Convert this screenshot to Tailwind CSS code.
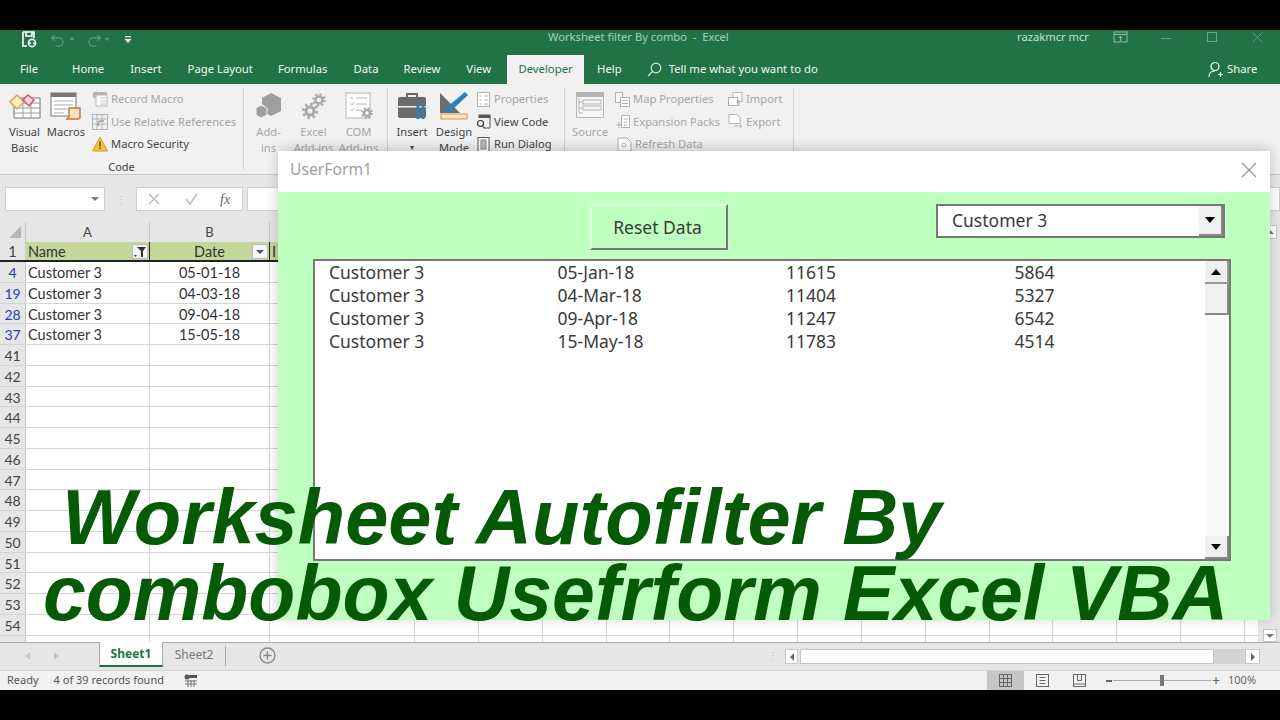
<!DOCTYPE html>
<html lang="en">
<head>
  <meta charset="UTF-8" />
  <title>Worksheet filter By combo - Excel</title>
  <script src="https://cdn.jsdelivr.net/npm/@tailwindcss/browser@4"></script>
</head>
<body class="relative w-[1280px] h-[720px] overflow-hidden bg-black font-['Noto_Sans',sans-serif]">

  <div class="h-[30px]"></div>

  <div class="h-[660px] flex flex-col bg-[#e6e6e6]">

    <!-- Title bar -->
    <div class="h-[25px] bg-[#217346] flex items-center relative text-[11.2px] text-[#a9cdb8]">
      <svg class="ml-[21px] w-[17px] h-[17px] -mt-[7px]" viewBox="0 0 17 17" fill="none" stroke="#fff" stroke-width="1.6"><path d="M2 1h11v6M2 1v14h4M5 1v4h6V1"/><circle cx="11" cy="12" r="3.6"/><path d="M8 12h2M12 12h2"/></svg>
      <svg class="ml-[12px] w-[26px] h-[16px] -mt-[5px]" viewBox="0 0 26 16" fill="none" stroke="#4e9a72" stroke-width="1.5"><path d="M5 3L1.5 6 5 9M2 6h7a4 4 0 0 1 0 8H6"/><path d="M20 6l2 2 2-2" fill="#4e9a72"/></svg>
      <svg class="ml-[9px] w-[26px] h-[16px] -mt-[5px]" viewBox="0 0 26 16" fill="none" stroke="#4e9a72" stroke-width="1.5"><path d="M12 3l3.500 3L12 9M15 6H8a4 4 0 0 0 0 8h3"/><path d="M20 6l2 2 2-2" fill="#4e9a72"/></svg>
      <svg class="ml-[12px] w-[10px] h-[10px] -mt-[5px]" viewBox="0 0 10 10" fill="#fff"><rect x="2" y="1" width="6" height="1.300"/><path d="M1.500 4h7L5 8z"/></svg>
      <span class="absolute left-[548px] -top-[1px] whitespace-pre">Worksheet filter By combo  -  Excel</span>
      <span class="absolute left-[1017px] -top-[1px] text-[#c5dfd0]">razakmcr mcr</span>
      <svg class="absolute left-[1113px] top-[1px] w-[15px] h-[12px]" viewBox="0 0 15 12" fill="none" stroke="#8dbca2"><rect x="1" y="1" width="13" height="10"/><path d="M1 3.500h13M7.500 10V5M5.500 7l2-2 2 2"/></svg>
      <div class="absolute left-[1161px] top-[8px] w-[10px] h-px bg-[#6aa585]"></div>
      <div class="absolute left-[1207px] top-[2px] w-[10px] h-[10px] border border-[#6aa585]"></div>
      <svg class="absolute left-[1252px] top-[2px] w-[11px] h-[11px]" viewBox="0 0 11 11" stroke="#5c9c7a"><path d="M.5.5l10 10M10.500.5l-10 10"/></svg>
    </div>

    <!-- Tabs -->
    <div class="h-[29px] bg-[#217346] flex items-stretch text-[11.3px] text-[#f2f7f4] relative">
      <div class="ml-[20px] mr-[21px] flex items-center">File</div>
      <div class="px-[13px] flex items-center">Home</div>
      <div class="px-[13px] flex items-center">Insert</div>
      <div class="pl-[13px] pr-[12px] flex items-center">Page Layout</div>
      <div class="px-[13px] flex items-center">Formulas</div>
      <div class="px-[13px] flex items-center">Data</div>
      <div class="pl-[12px] pr-[13px] flex items-center">Review</div>
      <div class="px-[13px] flex items-center">View</div>
      <div class="ml-[3px] w-[77px] justify-center bg-[#f1f1f1] text-[#217346] flex items-center">Developer</div>
      <div class="px-[13px] flex items-center">Help</div>
      <div class="ml-[12px] flex items-center gap-[7px]">
        <svg class="w-[15px] h-[15px]" viewBox="0 0 15 15" fill="none" stroke="#d6e6dc" stroke-width="1.200"><circle cx="9" cy="6" r="4.800"/><path d="M5.500 9.500L1 14"/></svg>
        <span>Tell me what you want to do</span>
      </div>
      <div class="absolute left-[1208px] top-0 h-full flex items-center gap-[3px]">
        <svg class="w-[16px] h-[17px]" viewBox="0 0 16 17" fill="none" stroke="#fff" stroke-width="1.200"><circle cx="7" cy="5.500" r="4"/><path d="M1 16c0-3.500 2-6 6-6M12.500 11v5M10 13.500h5"/></svg>
        <span>Share</span>
      </div>
    </div>

    <!-- Ribbon -->
    <div class="h-[91px] bg-[#f1f1f1] border-b border-[#c6c6c6] flex overflow-hidden text-[11.2px] text-[#444] leading-[16px] shrink-0">

      <!-- Code -->
      <div class="w-[244px] pl-[5px] border-r border-[#d4d4d4] my-[4px] relative">
        <div class="flex">
          <div class="w-[39px] pt-[4px] flex flex-col items-center">
            <svg class="w-[32px] h-[28px]" viewBox="0 0 32 28"><rect x="5" y="6" width="26" height="20" fill="#fff" stroke="#777"/><path d="M5 11h26M5 16h26M5 21h26M14 6v20M22 6v20" stroke="#999"/><path d="M1 10l7-7 7 7-7 7z" fill="#fbeec2" stroke="#d6a94e" stroke-width="1.500"/><path d="M14 8l5-5 6 5-5 6z" fill="#f6d5dc" stroke="#c4606f" stroke-width="1.500"/></svg>
            <div class="mt-[4px] text-center">Visual<br>Basic</div>
          </div>
          <div class="w-[44px] pt-[4px] flex flex-col items-center">
            <svg class="w-[32px] h-[28px]" viewBox="0 0 32 28"><rect x="1" y="1" width="25" height="23" fill="#fff" stroke="#777"/><rect x="1" y="1" width="25" height="4" fill="#777"/><path d="M4 9h19M4 13h19M4 17h14M4 21h10" stroke="#aaa"/><path d="M19 16h11v9a2 2 0 0 1-2 2H17l2-2z" fill="#f5e2c8" stroke="#c97a36" stroke-width="1.500"/></svg>
            <div class="mt-[4px]">Macros</div>
          </div>
          <div class="ml-[4px] flex flex-col">
            <div class="h-[22.5px] flex items-center gap-[3px] text-[#a6a6a6]">
              <svg class="w-[16px] h-[16px]" viewBox="0 0 16 16"><circle cx="4" cy="4" r="3.500" fill="#b5b5b5"/><rect x="4" y="4" width="11" height="11" fill="#fff" stroke="#b5b5b5"/><path d="M8 7h6M8 10h6M8 13h6" stroke="#c4c4c4"/><rect x="7" y="1" width="8" height="3" fill="#b5b5b5"/></svg>
              <span>Record Macro</span>
            </div>
            <div class="h-[22.5px] flex items-center gap-[3px] text-[#a6a6a6]">
              <svg class="w-[16px] h-[16px]" viewBox="0 0 16 16" fill="none" stroke="#b0b0b0"><rect x=".5" y=".5" width="15" height="15"/><path d="M1 5h14M5 1v14M10 1v14M1 10h14"/><path d="M7 12c-2-2-1-5 2-5h3" stroke="#999" stroke-width="1.300"/></svg>
              <span>Use Relative References</span>
            </div>
            <div class="h-[22.5px] flex items-center gap-[3px]">
              <svg class="w-[16px] h-[16px]" viewBox="0 0 16 16"><path d="M8 1l7.500 14H.5z" fill="#f5c242" stroke="#d89a2b"/><rect x="7.300" y="5.500" width="1.500" height="5" fill="#5a4a20"/><rect x="7.300" y="11.500" width="1.500" height="1.500" fill="#5a4a20"/></svg>
              <span>Macro Security</span>
            </div>
          </div>
        </div>
        <div class="absolute left-0 w-full top-[71px] text-center text-[11px]">Code</div>
      </div>

      <!-- Add-ins -->
      <div class="w-[144px] pl-[1px] flex text-[#a6a6a6] border-r border-[#d4d4d4] my-[4px]">
        <div class="w-[47px] pt-[4px] flex flex-col items-center">
          <svg class="w-[28px] h-[28px]" viewBox="0 0 28 28" fill="#9f9f9f"><path d="M16 1l10 5v13l-10 5-6-3V14l-3-2V6z"/><path d="M6 13l6 3v7l-6 3-5-3v-7z" stroke="#f1f1f1"/></svg>
          <div class="mt-[4px] text-center">Add-<br>ins</div>
        </div>
        <div class="w-[43px] pt-[4px] flex flex-col items-center">
          <svg class="w-[28px] h-[28px]" viewBox="0 0 28 28" fill="none" stroke="#ababab"><circle cx="19" cy="8" r="3.500" stroke-width="2.500"/><circle cx="19" cy="8" r="5.500" stroke-width="2.500" stroke-dasharray="2.200 2.100"/><circle cx="10" cy="19" r="4" stroke-width="3"/><circle cx="10" cy="19" r="6.700" stroke-width="3" stroke-dasharray="2.600 2.650"/></svg>
          <div class="mt-[4px] text-center whitespace-nowrap">Excel<br>Add-ins</div>
        </div>
        <div class="w-[47px] pt-[4px] flex flex-col items-center">
          <svg class="w-[30px] h-[28px]" viewBox="0 0 30 28" fill="none" stroke="#b5b5b5"><rect x="2" y="1" width="24" height="25" fill="#fff"/><path d="M6 6h3M12 6h11M6 11l2 2 2-3M12 12h11M6 17l2 2 2-3M12 18h6"/><circle cx="23" cy="21" r="3" stroke="#ababab" stroke-width="2.500"/><circle cx="23" cy="21" r="4.800" stroke="#ababab" stroke-width="2.200" stroke-dasharray="2 1.770"/></svg>
          <div class="mt-[4px] text-center whitespace-nowrap">COM<br>Add-ins</div>
        </div>
      </div>

      <!-- Controls -->
      <div class="w-[177px] flex border-r border-[#d4d4d4] my-[4px]">
        <div class="ml-[1px] w-[46px] pt-[4px] flex flex-col items-center">
          <svg class="w-[30px] h-[28px]" viewBox="0 0 30 28"><path d="M10 5V2h10v3" fill="none" stroke="#666" stroke-width="2"/><rect x="1" y="5" width="28" height="21" rx="2" fill="#6b6b6b"/><rect x="1" y="14" width="28" height="1.500" fill="#f1f1f1"/><path d="M21 12v15M26 12v15" stroke="#2f7fb8" stroke-width="3"/></svg>
          <div class="mt-[4px]">Insert</div>
          <div class="text-[8px] leading-[14px]">▾</div>
        </div>
        <div class="w-[38px] pt-[2px] flex flex-col items-center">
          <svg class="w-[32px] h-[30px]" viewBox="0 0 32 30"><path d="M2 3v20h20z" fill="#6e6e6e"/><path d="M9 17l18-15 3 3-17 16-6 2z" fill="#2f7fb8"/><rect x="3" y="24" width="26" height="5" fill="#fbe7c6" stroke="#d89a4e"/></svg>
          <div class="mt-[4px] text-center">Design<br>Mode</div>
        </div>
        <div class="ml-[3px] flex flex-col">
          <div class="h-[22.5px] flex items-center gap-[3px] text-[#a6a6a6]">
            <svg class="w-[15px] h-[15px]" viewBox="0 0 15 15" fill="#fff" stroke="#b5b5b5"><rect x="1.500" y=".5" width="12" height="14"/><path d="M3.500 4h2M3.500 8h2M3.500 12h2M8 4h4M8 8h4M8 12h4"/></svg>
            <span>Properties</span>
          </div>
          <div class="h-[22.5px] flex items-center gap-[3px]">
            <svg class="w-[15px] h-[15px]" viewBox="0 0 15 15" fill="none" stroke="#555"><path d="M3 2h11v12H9"/><rect x="3" y="1" width="11" height="2.500" fill="#555"/><circle cx="4.500" cy="9.500" r="3" stroke="#333" stroke-width="1.200"/><path d="M6.500 12L9 14.500" stroke-width="1.300"/></svg>
            <span>View Code</span>
          </div>
          <div class="h-[22.5px] flex items-center gap-[3px]">
            <svg class="w-[15px] h-[15px]" viewBox="0 0 15 15" fill="#fff" stroke="#555"><rect x="2" y=".5" width="11" height="14"/><rect x="5" y="3" width="5" height="9" fill="#bbb" stroke="#888"/></svg>
            <span>Run Dialog</span>
          </div>
        </div>
      </div>

      <!-- XML -->
      <div class="w-[229px] flex text-[#a6a6a6] border-r border-[#d4d4d4] my-[4px]">
        <div class="w-[50px] pt-[4px] flex flex-col items-center">
          <svg class="w-[28px] h-[26px]" viewBox="0 0 28 26" fill="#f7f7f7" stroke="#b5b5b5"><rect x=".5" y=".5" width="27" height="25"/><rect x=".5" y=".5" width="27" height="4" fill="#b5b5b5"/><rect x="7" y="8" width="18" height="4"/><rect x="7" y="14" width="18" height="4"/><path d="M3 6v15h4M3 10h4M3 16h4" fill="none"/></svg>
          <div class="mt-[6px]">Source</div>
        </div>
        <div class="flex flex-col w-[113px]">
          <div class="h-[22.5px] flex items-center gap-[3px]">
            <svg class="w-[15px] h-[15px]" viewBox="0 0 15 15" fill="#fff" stroke="#b0b0b0"><rect x=".5" y=".5" width="7" height="10"/><rect x="5.500" y="5.500" width="9" height="9"/><path d="M7 8.500h6M7 11.500h6"/></svg>
            <span>Map Properties</span>
          </div>
          <div class="h-[22.5px] flex items-center gap-[3px]">
            <svg class="w-[15px] h-[15px]" viewBox="0 0 15 15" fill="none" stroke="#b0b0b0"><rect x="6.500" y="1.500" width="8" height="12" fill="#fff"/><path d="M8.500 5h4M8.500 8h4M8.500 11h4M1 11h6M4 8v6" /></svg>
            <span class="whitespace-nowrap">Expansion Packs</span>
          </div>
          <div class="h-[22.5px] flex items-center gap-[3px] pl-[2px]">
            <svg class="w-[15px] h-[15px]" viewBox="0 0 15 15" fill="#fff" stroke="#b0b0b0"><path d="M1 1h9l4 4v9H1z"/><circle cx="7" cy="8" r="2"/></svg>
            <span>Refresh Data</span>
          </div>
        </div>
        <div class="flex flex-col">
          <div class="h-[22.5px] flex items-center gap-[3px]">
            <svg class="w-[15px] h-[15px]" viewBox="0 0 15 15" fill="#fff" stroke="#b0b0b0"><rect x="5" y=".5" width="9" height="9"/><rect x=".5" y="5.500" width="9" height="8"/><path d="M11 14V8"/></svg>
            <span>Import</span>
          </div>
          <div class="h-[22.5px] flex items-center gap-[3px]">
            <svg class="w-[15px] h-[15px]" viewBox="0 0 15 15" fill="#fff" stroke="#b0b0b0"><path d="M1 .5h8l3 3v6H1z"/><path d="M6 12h8M12 10l2 2-2 2" fill="none"/></svg>
            <span>Export</span>
          </div>
        </div>
      </div>
    </div>

    <!-- Formula bar -->
    <div class="h-[47px] flex items-start pt-[12px] pl-[5px] shrink-0 bg-[#e6e6e6]">
      <div class="w-[100px] h-[24px] bg-white border border-[#d0d0d0] flex items-center justify-end pr-[5px]">
        <div class="w-0 h-0 border-x-[4px] border-x-transparent border-t-[4px] border-t-[#777]"></div>
      </div>
      <div class="w-[31px] text-center text-[#bbb] text-[10px] leading-[24px]">⋮</div>
      <div class="w-[107px] h-[24px] bg-white border border-[#d0d0d0] flex items-center">
        <svg class="ml-[11px] w-[12px] h-[12px]" viewBox="0 0 12 12" stroke="#c0c0c0" stroke-width="1.500"><path d="M1 1l10 10M11 1L1 11"/></svg>
        <svg class="ml-[25px] w-[13px] h-[12px]" viewBox="0 0 13 12" fill="none" stroke="#c0c0c0" stroke-width="1.800"><path d="M1 6l4 5 7-10"/></svg>
        <span class="ml-[22px] font-['Liberation_Serif',serif] italic text-[14px] text-[#666]">fx</span>
      </div>
      <div class="ml-[4px] flex-1 h-[24px] bg-white border border-[#d0d0d0]"></div>
    </div>

    <!-- Sheet grid -->
    <div class="h-[420px] flex shrink-0 overflow-hidden">
      <div id="grid" class="w-[1258px] overflow-hidden font-['Lato',sans-serif] text-[14.5px] text-[#333]">
        <div class="h-[20px] flex bg-[#e6e6e6] text-[#444] text-[13px] leading-[20px]">
          <div class="w-[26px] flex items-end justify-end pr-[4px] pb-[4px] border-r border-[#c6c6c6]">
            <div class="w-0 h-0 border-l-[12px] border-l-transparent border-b-[12px] border-b-[#b5b5b5]"></div>
          </div>
          <div class="w-[124px] text-center border-r border-[#c6c6c6]">A</div>
          <div class="w-[120px] text-center border-r border-[#c6c6c6]">B</div>
          <div class="w-[145px] text-center">C</div>
        </div>
        <div class="h-[20px] flex leading-[19px] border-b-2 border-[#222]">
          <div class="w-[26px] bg-[#e6e6e6] text-center text-[#444] border-r border-[#c6c6c6]">1</div>
          <div class="w-[124px] bg-[#c4d79b] pl-[2px] flex justify-between border-r border-[#222]">
            <span>Name</span>
            <div class="w-[16px] h-[15px] mt-[2px] mr-[1px] bg-[#f5f5f5] border border-[#bbb] flex items-center justify-center">
              <svg class="w-[12px] h-[10px]" viewBox="0 0 12 10" fill="#333"><path d="M3 0h9L9 4v6H7V4zM0 8h3L1.500 10z"/></svg>
            </div>
          </div>
          <div class="w-[120px] bg-[#c4d79b] relative text-center border-r border-[#222]">Date
            <div class="absolute right-[1px] top-[2px] w-[16px] h-[15px] bg-[#f5f5f5] border border-[#bbb] flex items-center justify-center">
              <div class="w-0 h-0 border-x-[4px] border-x-transparent border-t-[4px] border-t-[#555]"></div>
            </div>
          </div>
          <div class="w-[145px] pl-[2px] bg-[#c4d79b]">I</div>
        </div>
        <div id="rows"></div>
      </div>
      <!-- vertical scrollbar -->
      <div class="flex-1 relative bg-[#e6e6e6]">
        <div class="absolute left-[5px] top-[3px] w-[14px] h-[14px] bg-white border border-[#c6c6c6] flex items-center justify-center">
          <div class="w-0 h-0 border-x-[4px] border-x-transparent border-b-[4px] border-b-[#777]"></div>
        </div>
        <div class="absolute left-[5px] bottom-0 w-[14px] h-[13px] bg-white border border-[#c6c6c6] flex items-center justify-center">
          <div class="w-0 h-0 border-x-[4px] border-x-transparent border-t-[4px] border-t-[#777]"></div>
        </div>
      </div>
    </div>

    <!-- Sheet tabs -->
    <div class="h-[28px] flex items-start border-t border-[#ababab] bg-[#e6e6e6] text-[12px] relative shrink-0">
      <div class="ml-[25px] mt-[9px] w-0 h-0 border-y-[4px] border-y-transparent border-r-[5px] border-r-[#c8c8c8]"></div>
      <div class="ml-[24px] mt-[9px] w-0 h-0 border-y-[4px] border-y-transparent border-l-[5px] border-l-[#c8c8c8]"></div>
      <div class="ml-[40px] -mt-px w-[64px] h-[25px] bg-white border-x border-b-2 border-x-[#ababab] border-b-[#217346] font-bold text-[#217346] text-center leading-[24px]">Sheet1</div>
      <div class="w-[63px] h-[20px] mt-[3px] text-center text-[#777] leading-[18px] border-r border-[#ababab]">Sheet2</div>
      <svg class="ml-[33px] mt-[4px] w-[17px] h-[17px]" viewBox="0 0 17 17" fill="none" stroke="#888" stroke-width="1.300"><circle cx="8.500" cy="8.500" r="7.500"/><path d="M8.500 4.500v8M4.500 8.500h8"/></svg>
      <div class="absolute left-[768px] top-[5px] text-[10px] leading-[14px] text-[#bbb]">⋮</div>
      <div class="absolute left-[785px] top-[6px] flex h-[15px] w-[475px]">
        <div class="w-[13px] bg-white border border-[#c6c6c6] flex items-center justify-center">
          <div class="w-0 h-0 border-y-[4px] border-y-transparent border-r-[4px] border-r-[#666]"></div>
        </div>
        <div class="ml-[2px] w-[414px] bg-white border border-[#c6c6c6]"></div>
        <div class="w-[31px] bg-[#d4d4d4]"></div>
        <div class="w-[15px] bg-white border border-[#c6c6c6] flex items-center justify-center">
          <div class="w-0 h-0 border-y-[4px] border-y-transparent border-l-[4px] border-l-[#666]"></div>
        </div>
      </div>
    </div>

    <!-- Status bar -->
    <div class="h-[20px] flex items-center bg-[#f1f1f1] border-t border-[#d4d4d4] text-[11px] text-[#555] relative shrink-0">
      <span class="ml-[7px]">Ready</span>
      <span class="ml-[15px]">4 of 39 records found</span>
      <svg class="ml-[20px] w-[13px] h-[13px]" viewBox="0 0 13 13"><circle cx="3" cy="3" r="2.500" fill="#555"/><rect x="5" y="1" width="8" height="3" fill="#555"/><path d="M1 7h12M1 10h12M4 6v7M7 6v7M10 6v7" stroke="#777"/></svg>
      <div class="absolute left-[987px] top-0 h-full flex items-center">
        <div class="w-[37px] h-full bg-[#c6c6c6] flex items-center justify-center">
          <svg class="w-[13px] h-[13px]" viewBox="0 0 13 13" fill="none" stroke="#666"><rect x=".5" y=".5" width="12" height="12"/><path d="M.5 4.500h12M.5 8.500h12M4.500 .5v12M8.500 .5v12"/></svg>
        </div>
        <div class="w-[37px] flex justify-center">
          <svg class="w-[13px] h-[13px]" viewBox="0 0 13 13" fill="none" stroke="#666"><rect x=".5" y=".5" width="12" height="12"/><path d="M3.500 3.500h6M3.500 6.500h6M3.500 9.500h6"/></svg>
        </div>
        <div class="w-[37px] flex justify-center">
          <svg class="w-[13px] h-[13px]" viewBox="0 0 13 13" fill="none" stroke="#666"><rect x=".5" y=".5" width="12" height="12"/><path d="M4.500 .5v6h4v-6M.5 10h12"/></svg>
        </div>
        <div class="ml-[8px] w-[6px] h-[2px] bg-[#666]"></div>
        <div class="ml-[1px] w-[98px] h-px bg-[#aaa] relative">
          <div class="absolute left-[47px] -top-[5px] w-[4px] h-[11px] bg-[#777]"></div>
        </div>
        <div class="ml-[1px] text-[14px] leading-[14px] text-[#666]">+</div>
        <span class="ml-[8px] text-[#666]">100%</span>
      </div>
    </div>
  </div>

  <div class="h-[30px]"></div>

  <!-- UserForm1 -->
  <div class="absolute left-[278px] top-[151px] w-[992px] h-[469px] flex flex-col bg-white shadow-[0_-2px_12px_rgba(0,0,0,0.2)]">
    <div class="h-[41px] flex items-center justify-between pl-[12px] pr-[13px] pb-[3px] shrink-0">
      <span class="text-[15.7px] text-[#a0a0a0]">UserForm1</span>
      <svg class="w-[16px] h-[16px]" viewBox="0 0 16 16" stroke="#9a9a9a" stroke-width="1.300"><path d="M1 1l14 14M15 1L1 15"/></svg>
    </div>
    <div class="flex-1 bg-[#bfffbf] pt-[12px] font-['Noto_Sans',sans-serif] text-[#3a3a3a] text-[17.5px]">
      <div class="flex items-start h-[46px]">
        <div class="ml-[312px] w-[138px] h-[46px] pr-[3px] bg-[#bfffbf] border-2 border-t-[#e4ffe4] border-l-[#e4ffe4] border-r-[#777] border-b-[#777] flex items-center justify-center">Reset Data</div>
        <div class="ml-[208px] w-[289px] h-[34px] bg-white border-2 border-[#777] flex items-center justify-between">
          <span class="ml-[14px] -mt-[2px]">Customer 3</span>
          <div class="w-[24px] h-full bg-[#f0f0f0] border-r-2 border-b-2 border-[#888] flex items-center justify-center">
            <div class="w-0 h-0 border-x-[5px] border-x-transparent border-t-[6px] border-t-black"></div>
          </div>
        </div>
      </div>
      <div class="mt-[9px] ml-[35px] w-[918px] h-[302px] bg-white border-2 border-[#777] relative">
        <div id="list" class="pl-[14px] leading-[23px]"></div>
        <div class="absolute right-0 top-0 bottom-0 w-[24px] bg-[#fafafa] flex flex-col justify-between">
          <div>
            <div class="h-[23px] bg-[#f0f0f0] border-r-2 border-b-2 border-[#999] flex items-center justify-center">
              <div class="w-0 h-0 border-x-[5px] border-x-transparent border-b-[6px] border-b-black"></div>
            </div>
            <div class="h-[31px] bg-[#f0f0f0] border-r-2 border-b-2 border-[#888]"></div>
          </div>
          <div class="h-[23px] bg-[#f0f0f0] border-r-2 border-b-2 border-[#888] flex items-center justify-center">
            <div class="w-0 h-0 border-x-[5px] border-x-transparent border-t-[6px] border-t-black"></div>
          </div>
        </div>
      </div>
    </div>
  </div>

  <!-- Video title over everything -->
  <div class="absolute left-[62px] top-[478px] whitespace-nowrap font-['Liberation_Sans',sans-serif] font-bold italic text-[77.6px] leading-[78px] text-[#055a05]">Worksheet Autofilter By</div>
  <div class="absolute left-[43px] top-[554px] whitespace-nowrap font-['Liberation_Sans',sans-serif] font-bold italic text-[77px] leading-[78px] text-[#055a05]">combobox Usefrform Excel VBA</div>

  <script>
    // row labels down the left side, filtered ones are blue
    const labels = [4, 19, 28, 37, 41, 42, 43, 44, 45, 46, 47, 48, 49, 50, 51, 52, 53, 54, ""];
    const data = {
      4: ["Customer 3", "05-01-18"],
      19: ["Customer 3", "04-03-18"],
      28: ["Customer 3", "09-04-18"],
      37: ["Customer 3", "15-05-18"]
    };
    const rows = document.getElementById("rows");
    labels.forEach(n => {
      const d = data[n] || ["", ""];
      const numClass = data[n] ? "text-[#2b3ab5]" : "text-[#444]";
      let extra = "";
      for (let i = 0; i < 14; i++) {
        extra += `<div class="w-[63.85px] shrink-0 border-r border-[#d4d4d4]"></div>`;
      }
      const row = document.createElement("div");
      row.className = "h-[20.75px] flex leading-[21px] bg-white border-b border-[#d4d4d4] overflow-hidden";
      row.innerHTML = `
        <div class="w-[26px] shrink-0 bg-[#e6e6e6] text-center text-[14px] border-r border-[#c6c6c6] ${numClass}">${n}</div>
        <div class="w-[124px] shrink-0 pl-[2px] border-r border-[#d4d4d4]">${d[0]}</div>
        <div class="w-[120px] shrink-0 text-center border-r border-[#d4d4d4]">${d[1]}</div>
        <div class="w-[145px] shrink-0 border-r border-[#d4d4d4]"></div>
        ${extra}`;
      rows.appendChild(row);
    });

    const listData = [
      ["Customer 3", "05-Jan-18", "11615", "5864"],
      ["Customer 3", "04-Mar-18", "11404", "5327"],
      ["Customer 3", "09-Apr-18", "11247", "6542"],
      ["Customer 3", "15-May-18", "11783", "4514"]
    ];
    const list = document.getElementById("list");
    listData.forEach(r => {
      const row = document.createElement("div");
      row.className = "flex h-[23px]";
      row.innerHTML = r.map(v => `<div class="w-[228.5px] shrink-0">${v}</div>`).join("");
      list.appendChild(row);
    });
  </script>
</body>
</html>
